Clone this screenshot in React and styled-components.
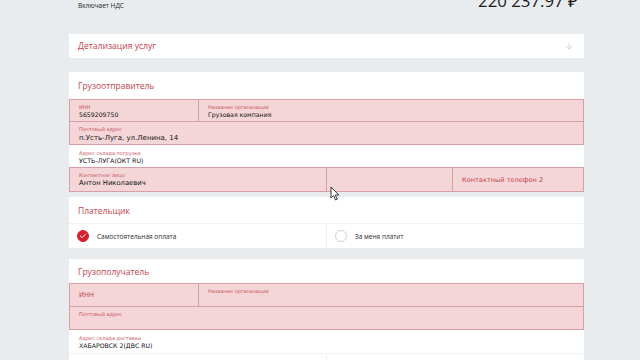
import styled, { createGlobalStyle } from "styled-components";
import { ArrowDown, Check } from "lucide-react";

const Global = createGlobalStyle`
  html, body { margin: 0; padding: 0; }
  body {
    width: 640px;
    height: 360px;
    overflow: hidden;
    background: #e9ecef;
    font-family: "DejaVu Sans", Verdana, sans-serif;
  }
`;

const Page = styled.div`
  position: relative;
  width: 515px;
  padding-left: 69px;
  display: flex;
  flex-direction: column;
`;

const Summary = styled.div`
  display: flex;
  justify-content: space-between;
  align-items: flex-end;
  margin-top: -16px;
  height: 27px;
  padding: 0 6px 0 9px;
`;

const Vat = styled.div`
  font-family: "Open Sans", sans-serif;
  font-size: 6.5px;
  line-height: 10px;
  color: #222;
`;

const Price = styled.div`
  font-family: "Open Sans", sans-serif;
  font-size: 16.8px;
  line-height: 18px;
  color: #1a1a1a;
  margin-bottom: 1px;
`;

const Card = styled.div`
  background: #fff;
  margin-top: ${(p) => p.$gap}px;
  display: flex;
  flex-direction: column;
`;

const Collapse = styled.div`
  height: 24px;
  padding: 0 10px 0 9px;
  display: flex;
  align-items: center;
  justify-content: space-between;
  color: #c4424a;
  font-family: "Open Sans", sans-serif;
  font-size: 8.6px;
`;

const Header = styled.div`
  height: ${(p) => p.$h}px;
  padding-left: 9px;
  display: flex;
  align-items: center;
  color: #c4424a;
  font-family: "Open Sans", sans-serif;
  font-size: 8.5px;
  box-sizing: border-box;
`;

const Row = styled.div`
  display: grid;
  grid-template-columns: ${(p) => p.$cols || "1fr"};
  height: ${(p) => p.$h || 23}px;
  box-sizing: border-box;
  background: ${(p) => (p.$error ? "#f4d6d8" : "#fff")};
  border: 1px solid ${(p) => (p.$error ? "#d7a0a5" : "transparent")};
  border-top: ${(p) => (p.$joined ? "none" : undefined)};
`;

const Cell = styled.div`
  padding: 0 9px;
  padding-top: ${(p) => (p.$center ? 0 : 4)}px;
  display: flex;
  flex-direction: column;
  justify-content: ${(p) => (p.$center ? "center" : "flex-start")};
  border-left: ${(p) => (p.$divided ? "1px solid #d7a0a5" : "none")};
  min-width: 0;
`;

const Label = styled.div`
  font-size: 5px;
  line-height: 6px;
  color: #c9555c;
`;

const Value = styled.div`
  font-size: ${(p) => p.$size || 6.2}px;
  line-height: ${(p) => (p.$size >= 7 ? 13 : p.$size > 6.5 ? 11 : 9)}px;
  color: #111;
  white-space: nowrap;
`;

const Placeholder = styled.div`
  font-size: ${(p) => p.$size || 6.6}px;
  color: #c4424a;
`;

const Options = styled.div`
  display: grid;
  grid-template-columns: 257px 1fr;
  height: 25px;
  border-top: 1px solid #eef0f2;
  box-sizing: border-box;
`;

const Option = styled.div`
  display: flex;
  align-items: center;
  gap: 8px;
  padding-left: 8px;
  border-left: ${(p) => (p.$divided ? "1px solid #eef0f2" : "none")};
  font-family: "Open Sans", sans-serif;
  font-size: 6.5px;
  color: #2a2a2a;
`;

const Radio = styled.span`
  width: 12px;
  height: 12px;
  border-radius: 50%;
  box-sizing: border-box;
  display: flex;
  align-items: center;
  justify-content: center;
  background: ${(p) => (p.$on ? "#d5202b" : "#fff")};
  border: 1px solid ${(p) => (p.$on ? "#d5202b" : "#cfd2d6")};
  color: #fff;
`;

const Pointer = styled.svg`
  position: absolute;
  left: 330px;
  top: 186px;
`;

function Field({ label, value, size, divided }) {
  return (
    <Cell $divided={divided}>
      <Label>{label}</Label>
      {value && <Value $size={size}>{value}</Value>}
    </Cell>
  );
}

export default function App() {
  return (
    <Page>
      <Global />
      <Summary>
        <Vat>Включает НДС</Vat>
        <Price>220 237.97 ₽</Price>
      </Summary>

      <Card $gap={23}>
        <Collapse>
          Детализация услуг
          <ArrowDown size={10} color="#b5b5b5" strokeWidth={1.2} />
        </Collapse>
      </Card>

      <Card $gap={14}>
        <Header $h={27}>Грузоотправитель</Header>
        <Row $error $cols="128px 1fr">
          <Field label="ИНН" value="5659209750" />
          <Field label="Название организации" value="Грузовая компания" divided />
        </Row>
        <Row $error $joined>
          <Field label="Почтовый адрес" value="п.Усть-Луга, ул.Ленина, 14" size={7} />
        </Row>
        <Row $h={22}>
          <Field label="Адрес склада погрузки" value="УСТЬ-ЛУГА(ОКТ RU)" size={6.3} />
        </Row>
        <Row $error $h={25} $cols="256px 126px 1fr">
          <Field label="Контактное лицо" value="Антон Николаевич" size={6.8} />
          <Cell $divided />
          <Cell $divided $center>
            <Placeholder>Контактный телефон 2</Placeholder>
          </Cell>
        </Row>
      </Card>

      <Card $gap={5}>
        <Header $h={26}>Плательщик</Header>
        <Options>
          <Option>
            <Radio $on>
              <Check size={8} strokeWidth={3} />
            </Radio>
            Самостоятельная оплата
          </Option>
          <Option $divided>
            <Radio />
            За меня платит
          </Option>
        </Options>
      </Card>

      <Card $gap={11}>
        <Header $h={24}>Грузополучатель</Header>
        <Row $error $h={24} $cols="128px 1fr">
          <Cell $center>
            <Placeholder>ИНН</Placeholder>
          </Cell>
          <Field label="Название организации" divided />
        </Row>
        <Row $error $joined>
          <Field label="Почтовый адрес" />
        </Row>
        <Row $h={23}>
          <Field label="Адрес склада доставки" value="ХАБАРОВСК 2(ДВС RU)" />
        </Row>
        <Options>
          <Option>
            <Radio $on>
              <Check size={8} strokeWidth={3} />
            </Radio>
            Самостоятельная оплата
          </Option>
          <Option $divided>
            <Radio />
            За меня платит
          </Option>
        </Options>
      </Card>

      <Pointer width="10" height="15" viewBox="0 0 10 15">
        <path d="M1 1 L1 12 L3.6 9.6 L5.6 14 L7.2 13.3 L5.3 9 L8.8 9 Z" fill="#fff" stroke="#222" strokeWidth="0.9" strokeLinejoin="round" />
      </Pointer>
    </Page>
  );
}
